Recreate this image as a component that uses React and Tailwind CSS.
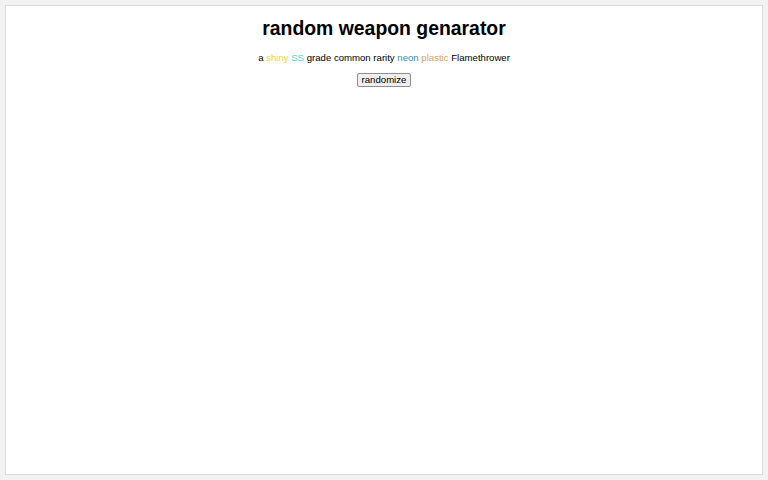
export default function App() {
  return (
    <div className="h-[480px] bg-[#f2f2f2] p-[5px] font-['Liberation_Sans',Arial,sans-serif]">
      <div className="flex h-full flex-col items-center border border-[#dcdcdc] bg-white">
        <h1 className="mt-[10px] text-[19.4px] leading-[24px] font-bold text-black">
          random weapon genarator
        </h1>
        <p className="mt-[12px] text-[9.6px] leading-[12px] text-black">
          a <span className="text-[#f2d52a]">shiny</span>{" "}
          <span className="text-[#4fd6cc]">SS</span> grade common rarity{" "}
          <span className="text-[#2f8fb8]">neon</span>{" "}
          <span className="text-[#d9a455]">plastic</span> Flamethrower
        </p>
        <button className="mt-[9px] h-[14px] rounded-[2px] border border-[#8f8f8f] bg-[#efefef] px-[4px] text-[9.6px] leading-[12px] text-black">
          randomize
        </button>
      </div>
    </div>
  );
}
